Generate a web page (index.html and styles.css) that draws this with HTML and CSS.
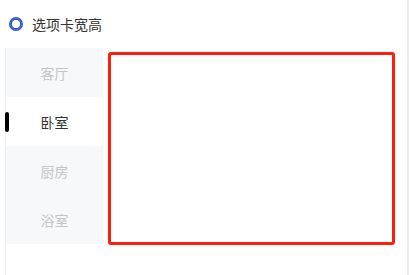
FILE: index.html
```html
<!DOCTYPE html>
<html lang="zh">
<head>
<meta charset="utf-8">
<link rel="stylesheet" href="styles.css">
</head>
<body>
<div class="page">
  <div class="header">
    <span class="radio"></span>
    <span class="title">选项卡宽高</span>
  </div>
  <div class="tabs">
    <div class="sidebar">
      <div class="tab">客厅</div>
      <div class="tab active">卧室</div>
      <div class="tab">厨房</div>
      <div class="tab">浴室</div>
    </div>
    <div class="panel"></div>
  </div>
</div>
</body>
</html>
```
FILE: styles.css
```css
html, body {
  margin: 0;
  padding: 0;
  background: #ffffff;
}
body {
  font-family: "Noto Sans CJK SC", "Noto Sans", sans-serif;
  width: 409px;
  height: 275px;
  overflow: hidden;
}
.page {
  height: 275px;
  box-sizing: border-box;
  border-right: 2px solid #ececec;
}
.header {
  height: 48px;
  display: flex;
  align-items: center;
  padding-left: 9px;
  box-sizing: border-box;
}
.radio {
  width: 14px;
  height: 14px;
  box-sizing: border-box;
  border: 3px solid #3c64c4;
  border-radius: 50%;
}
.title {
  margin-left: 9px;
  font-size: 14px;
  color: #333333;
  line-height: 20px;
}
.tabs {
  margin-left: 5px;
  border-left: 1px solid #f0f0f0;
  height: 227px;
  display: flex;
  align-items: flex-start;
}
.sidebar {
  width: 97px;
  background: #f7f8fa;
  display: flex;
  flex-direction: column;
}
.tab {
  height: 49px;
  display: flex;
  align-items: center;
  justify-content: center;
  font-size: 14px;
  color: #c4c4c4;
  position: relative;
}
.tab.active {
  background: #ffffff;
  color: #333333;
}
.tab.active::before {
  content: "";
  position: absolute;
  left: -1px;
  top: 15px;
  width: 4px;
  height: 20px;
  background: #000000;
  border-radius: 2px;
}
.panel {
  margin-left: 5px;
  margin-top: 4px;
  width: 287px;
  height: 193px;
  box-sizing: border-box;
  border: 3px solid #ff1e0e;
  border-radius: 3px;
}
```
